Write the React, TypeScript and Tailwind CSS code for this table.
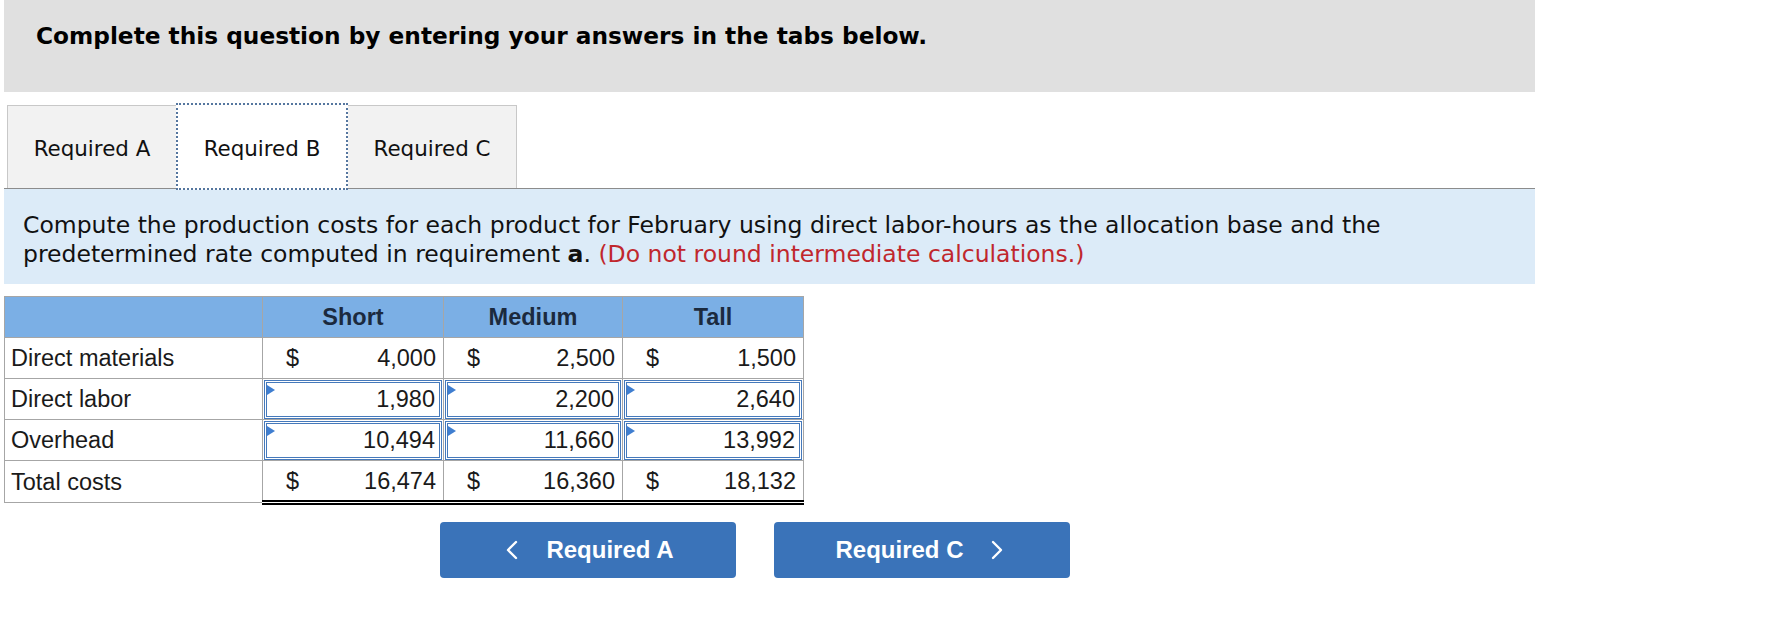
import React from "react";

const verdana = "font-['DejaVu_Sans',Verdana,sans-serif]";
const arial = "font-['Liberation_Sans',Arial,Helvetica,sans-serif]";

function Triangle() {
  return (
    <span className="absolute left-0 top-[2px] w-0 h-0 border-y-[5px] border-y-transparent border-l-[8px] border-l-[#3f7ed0]" />
  );
}

function InputCell({ value }: { value: string }) {
  return (
    <td className="border border-[#a6a6a6] p-0 h-[41px]">
      <div className="relative h-[39px] mx-[1px] pt-[2px] border-[3px] border-double border-[#4579bb] flex items-center justify-end pr-[4px]">
        <Triangle />
        <span>{value}</span>
      </div>
    </td>
  );
}

function DollarCell({ value, total }: { value: string; total?: boolean }) {
  return (
    <td
      className={
        "border border-[#a6a6a6] p-0 pt-[2px] h-[41px] " +
        (total ? "border-b-[5px] border-b-black border-double" : "")
      }
    >
      <div className="flex items-center justify-between pl-[23px] pr-[7px]">
        <span>$</span>
        <span>{value}</span>
      </div>
    </td>
  );
}

function Chevron({ dir }: { dir: "left" | "right" }) {
  return (
    <svg width="12" height="20" viewBox="0 0 12 20" fill="none">
      {dir === "left" ? (
        <polyline points="10,2 2,10 10,18" stroke="white" strokeWidth="2.4" strokeLinecap="round" strokeLinejoin="round" />
      ) : (
        <polyline points="2,2 10,10 2,18" stroke="white" strokeWidth="2.4" strokeLinecap="round" strokeLinejoin="round" />
      )}
    </svg>
  );
}

export default function App() {
  return (
    <div className={"w-[1784px] h-[634px] bg-white " + verdana}>
      <div className="ml-[4px] w-[1531px]">
        <div className="h-[92px] bg-[#e0e0e0] pl-[32px] pt-[22px]">
          <div className="text-[23.25px] leading-[28px] font-bold text-black">
            Complete this question by entering your answers in the tabs below.
          </div>
        </div>
        <div className="mt-[11px] h-[86px] flex items-end pl-[3px] border-b border-[#8c8c8c]">
          <div className="w-[169px] h-[83px] pt-[4px] bg-[#f2f2f2] border-t border-l border-[#c8c8c8] flex items-center justify-center text-[21.4px] text-[#111]">
            Required A
          </div>
          <div className="relative z-10 w-[172px] h-[87px] -mb-[2px] pt-[5px] bg-white border-[2px] border-dotted border-[#55769f] flex items-center justify-center text-[21.4px] text-[#111]">
            Required B
          </div>
          <div className="w-[169px] h-[83px] pt-[4px] bg-[#f2f2f2] border-t border-r border-[#c8c8c8] flex items-center justify-center text-[21.4px] text-[#111]">
            Required C
          </div>
        </div>
        <div className="h-[95px] bg-[#dcebf8] pl-[19px] pt-[22px] text-[23.5px] leading-[29px] text-[#111]">
          <div>
            Compute the production costs for each product for February using direct labor-hours as the allocation base and the
          </div>
          <div>
            predetermined rate computed in requirement <b>a</b>.{" "}
            <span className="text-[#c0272d]">(Do not round intermediate calculations.)</span>
          </div>
        </div>
      </div>

      <table className={"ml-[4px] mt-[12px] border-collapse text-[23.5px] text-[#1a1a1a] " + arial}>
        <colgroup>
          <col className="w-[258px]" />
          <col className="w-[181px]" />
          <col className="w-[179px]" />
          <col className="w-[181px]" />
        </colgroup>
        <thead>
          <tr className="bg-[#7bafe5] h-[41px]">
            <th className="border border-[#a6a6a6]"></th>
            <th className="border border-[#a6a6a6] pt-[2px] font-bold text-[#1b2a3e] text-center">Short</th>
            <th className="border border-[#a6a6a6] pt-[2px] font-bold text-[#1b2a3e] text-center">Medium</th>
            <th className="border border-[#a6a6a6] pt-[2px] font-bold text-[#1b2a3e] text-center">Tall</th>
          </tr>
        </thead>
        <tbody>
          <tr>
            <td className="border border-[#a6a6a6] pl-[6px] pt-[2px] h-[41px]">Direct materials</td>
            <DollarCell value="4,000" />
            <DollarCell value="2,500" />
            <DollarCell value="1,500" />
          </tr>
          <tr>
            <td className="border border-[#a6a6a6] pl-[6px] pt-[2px] h-[41px]">Direct labor</td>
            <InputCell value="1,980" />
            <InputCell value="2,200" />
            <InputCell value="2,640" />
          </tr>
          <tr>
            <td className="border border-[#a6a6a6] pl-[6px] pt-[2px] h-[41px]">Overhead</td>
            <InputCell value="10,494" />
            <InputCell value="11,660" />
            <InputCell value="13,992" />
          </tr>
          <tr>
            <td className="border border-[#a6a6a6] pl-[6px] pt-[2px] h-[42px]">Total costs</td>
            <DollarCell value="16,474" total />
            <DollarCell value="16,360" total />
            <DollarCell value="18,132" total />
          </tr>
        </tbody>
      </table>

      <div className={"mt-[17px] ml-[440px] flex gap-[38px] " + arial}>
        <button className="w-[296px] h-[56px] rounded-[4px] bg-[#3a73b9] flex items-center justify-center gap-[28px] pl-[4px] text-white text-[24px] font-bold">
          <Chevron dir="left" />
          <span>Required A</span>
        </button>
        <button className="w-[296px] h-[56px] rounded-[4px] bg-[#3a73b9] flex items-center justify-center gap-[27px] pr-[6px] text-white text-[24px] font-bold">
          <span>Required C</span>
          <Chevron dir="right" />
        </button>
      </div>
    </div>
  );
}
